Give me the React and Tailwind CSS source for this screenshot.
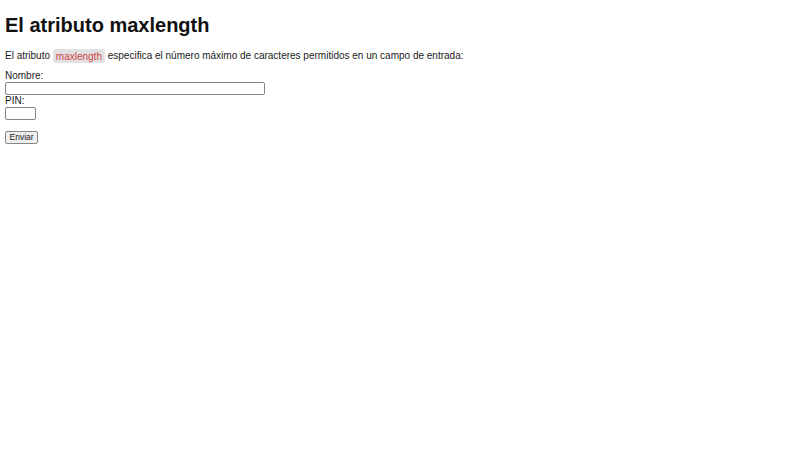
export default function App() {
  return (
    <div className="min-h-screen bg-white p-[5px] text-[#1a1a1a]" style={{ fontFamily: '"Liberation Sans", Arial, sans-serif' }}>
      <h1 className="mt-[8px] text-[20px] font-bold leading-[24px] text-[#111]">El atributo maxlength</h1>
      <p className="mt-[13px] text-[10px] leading-[12px]">
        El atributo{' '}
        <code className="rounded-[3px] bg-[#e2e2e2] px-[3px] py-[1.5px] text-[#cc4444]" style={{ fontFamily: '"Liberation Sans", Arial, sans-serif' }}>maxlength</code>{' '}
        especifica el número máximo de caracteres permitidos en un campo de entrada:
      </p>
      <form className="mt-[8px] flex flex-col items-start text-[10px] leading-[12px]">
        <label>Nombre:</label>
        <input type="text" className="h-[13px] w-[260px] rounded-[2px] border border-[#858585] bg-white" />
        <label>PIN:</label>
        <input type="text" maxLength={4} className="h-[13px] w-[31px] rounded-[2px] border border-[#858585] bg-white" />
        <button type="button" className="mt-[11px] h-[13px] rounded-[2px] border border-[#858585] bg-[#efefef] px-[3.5px] text-[8.5px] leading-[11px]">Enviar</button>
      </form>
    </div>
  );
}
